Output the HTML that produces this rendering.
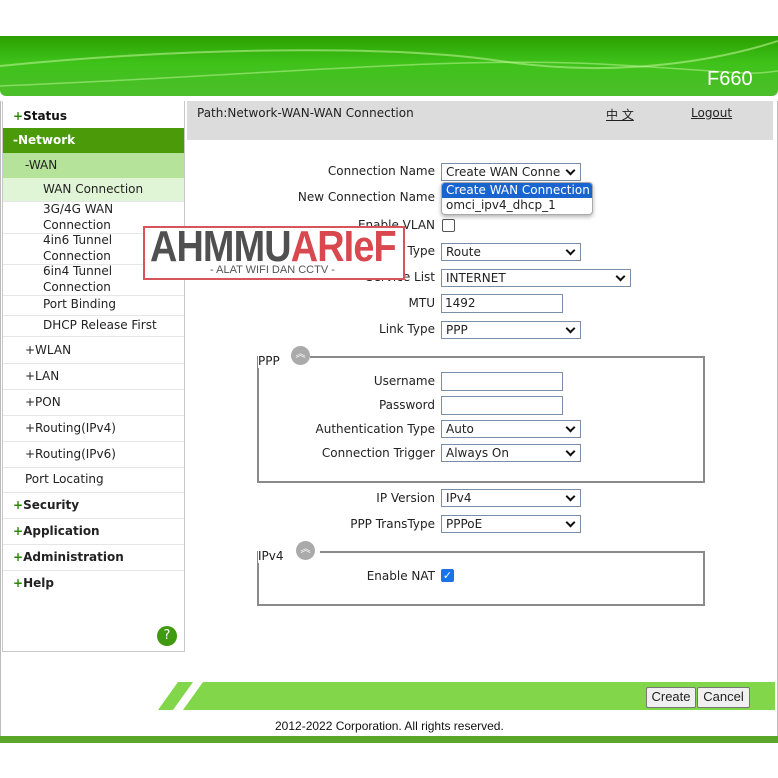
<!DOCTYPE html><html><head><meta charset="utf-8"><style>
body{margin:0;width:778px;height:778px;background:#fff;position:relative;overflow:hidden;font-family:"DejaVu Sans","Liberation Sans",sans-serif;font-size:12px;color:#222}
.a{position:absolute;white-space:nowrap}
.hdr{left:0;top:36px;width:778px;height:60px;background:linear-gradient(180deg,#2aa000 0%,#3fc21a 45%,#4bbf2a 100%);border-radius:0 0 6px 6px}
.side{left:2px;top:101px;width:181px;height:550px;border:1px solid #c8c8c8;border-top:none}
.r{position:absolute;left:0;width:181px;border-bottom:1px solid #e6e6e6;line-height:25px}
.lbl{position:absolute;right:343px;text-align:right}
.sel{position:absolute;left:441px;height:18px;border:1px solid #7a8da6;background:#fff;line-height:16px;padding-left:4px;box-sizing:border-box}
.sel:after{content:"";position:absolute;right:6px;top:3px;width:5px;height:5px;border-right:2px solid #111;border-bottom:2px solid #111;transform:rotate(45deg)}
.inp{position:absolute;left:441px;height:19px;border:1px solid #7a8da6;box-sizing:border-box;background:#fff;line-height:17px;padding-left:3px}
.fs{position:absolute;border:2px solid #8a8a8a}
.up{position:absolute;width:19px;height:19px;border-radius:50%;background:#aaa;color:#fff;font-size:10px;text-align:center;line-height:17px}
.btn{position:absolute;top:687px;height:19px;border:1px solid #777;background:#f0f0f0;border-radius:2px;font-family:"Liberation Sans",sans-serif;font-size:13px;line-height:18px;text-align:center}
</style></head><body>
<div class="a hdr"></div>
<svg class="a" style="left:0;top:36px" width="778" height="60"><path d="M0 30 C200 10 400 10 500 25 S700 30 778 5" stroke="#b8f090" stroke-width="2" fill="none" opacity=".6"/><path d="M0 50 C250 40 450 20 600 28 S740 40 778 35" stroke="#c8f8a0" stroke-width="1.5" fill="none" opacity=".5"/></svg>
<div class="a" style="left:707px;top:68px;color:#fff;font-family:'Liberation Sans',sans-serif;font-size:20px">F660</div>
<div class="a" style="left:0;top:101px;width:1px;height:636px;background:#bbb"></div>
<div class="a" style="left:777px;top:101px;width:1px;height:636px;background:#bbb"></div>
<div class="a side">
<div class="r" style="top:3px;font-weight:bold;color:#111"><span style="margin-left:10px;color:#2a8a00">+</span>Status</div>
<div class="r" style="top:27px;background:#4a9a0a;color:#fff;font-weight:bold;padding-left:10px;width:171px">-Network</div>
<div class="r" style="top:52px;background:#b6e39a;padding-left:22px;width:159px">-WAN</div>
<div class="r" style="top:77px;background:#e0f5d5;padding-left:40px;width:141px;line-height:23px">WAN Connection</div>
<div class="r" style="top:101px;padding-left:40px;width:141px;line-height:15.5px">3G/4G WAN<br>Connection</div>
<div class="r" style="top:132px;padding-left:40px;width:141px;line-height:15.5px">4in6 Tunnel<br>Connection</div>
<div class="r" style="top:163px;padding-left:40px;width:141px;line-height:15.5px">6in4 Tunnel<br>Connection</div>
<div class="r" style="top:193px;padding-left:40px;width:141px;line-height:21px">Port Binding</div>
<div class="r" style="top:214px;padding-left:40px;width:141px;line-height:21px">DHCP Release First</div>
<div class="r" style="top:237px;padding-left:22px;width:159px">+WLAN</div>
<div class="r" style="top:263px;padding-left:22px;width:159px">+LAN</div>
<div class="r" style="top:289px;padding-left:22px;width:159px">+PON</div>
<div class="r" style="top:315px;padding-left:22px;width:159px">+Routing(IPv4)</div>
<div class="r" style="top:341px;padding-left:22px;width:159px">+Routing(IPv6)</div>
<div class="r" style="top:366px;padding-left:22px;width:159px">Port Locating</div>
<div class="r" style="top:392px;font-weight:bold"><span style="margin-left:10px;color:#2a8a00">+</span>Security</div>
<div class="r" style="top:418px;font-weight:bold"><span style="margin-left:10px;color:#2a8a00">+</span>Application</div>
<div class="r" style="top:444px;font-weight:bold"><span style="margin-left:10px;color:#2a8a00">+</span>Administration</div>
<div class="r" style="top:470px;font-weight:bold;border:none"><span style="margin-left:10px;color:#2a8a00">+</span>Help</div>
<div style="position:absolute;left:154px;top:525px;width:20px;height:20px;border-radius:50%;background:#3f9a10;color:#fff;text-align:center;line-height:20px;font-size:13px">?</div>
</div>
<div class="a" style="left:187px;top:101px;width:586px;height:39px;background:#dcdcdc"></div>
<div class="a" style="left:197px;top:106px">Path:Network-WAN-WAN Connection</div>
<div class="a" style="left:606px;top:106px;text-decoration:underline">中 文</div>
<div class="a" style="left:691px;top:106px;text-decoration:underline">Logout</div>

<div class="lbl" style="top:164px">Connection Name</div>
<div class="sel" style="top:163px;width:140px">Create WAN Conne</div>
<div class="lbl" style="top:190px">New Connection Name</div>
<div class="lbl" style="top:218px">Enable VLAN</div>
<div class="a" style="left:442px;top:219px;width:11px;height:11px;border:1px solid #555;border-radius:2px"></div>
<div class="lbl" style="top:244px">Type</div>
<div class="sel" style="top:243px;width:140px">Route</div>
<div class="lbl" style="top:270px">Service List</div>
<div class="sel" style="top:269px;width:190px">INTERNET</div>
<div class="lbl" style="top:296px">MTU</div>
<div class="inp" style="top:294px;width:122px">1492</div>
<div class="lbl" style="top:322px">Link Type</div>
<div class="sel" style="top:321px;width:140px">PPP</div>

<div class="fs" style="left:257px;top:356px;width:444px;height:123px"></div>
<div class="a" style="left:258px;top:354px;background:#fff;padding-right:30px">PPP</div>
<div class="up" style="left:291px;top:346px">︽</div>
<div class="lbl" style="top:374px">Username</div>
<div class="inp" style="top:372px;width:122px"></div>
<div class="lbl" style="top:398px">Password</div>
<div class="inp" style="top:396px;width:122px"></div>
<div class="lbl" style="top:422px">Authentication Type</div>
<div class="sel" style="top:420px;width:140px">Auto</div>
<div class="lbl" style="top:446px">Connection Trigger</div>
<div class="sel" style="top:444px;width:140px">Always On</div>

<div class="lbl" style="top:491px">IP Version</div>
<div class="sel" style="top:489px;width:140px">IPv4</div>
<div class="lbl" style="top:517px">PPP TransType</div>
<div class="sel" style="top:515px;width:140px">PPPoE</div>

<div class="fs" style="left:257px;top:551px;width:444px;height:51px"></div>
<div class="a" style="left:258px;top:549px;background:#fff;padding-right:36px">IPv4</div>
<div class="up" style="left:296px;top:541px">︽</div>
<div class="lbl" style="top:569px">Enable NAT</div>
<div class="a" style="left:441px;top:569px;width:13px;height:13px;background:#1a73e8;border-radius:2px;color:#fff;font-size:11px;line-height:13px;text-align:center">✓</div>

<div class="a" style="left:441px;top:182px;width:150px;height:31px;background:#fff;border:1px solid #aaa;border-radius:4px;box-shadow:0 2px 4px rgba(0,0,0,.3);overflow:hidden">
<div style="background:#1a64d0;color:#fff;height:15px;line-height:15px;padding-left:4px">Create WAN Connection</div>
<div style="padding-left:4px;line-height:15px">omci_ipv4_dhcp_1</div></div>

<div class="a" style="left:143px;top:226px;width:258px;height:50px;border:2px solid #d9535a;background:#fff"></div>
<div class="a" style="left:150px;top:222px;font-family:'Liberation Sans',sans-serif;font-weight:bold;font-size:44px;letter-spacing:-1px;transform:scaleX(.86);transform-origin:0 0"><span style="color:#505050">AHMMU</span><span style="color:#d9474f">ARIeF</span></div>
<div class="a" style="left:210px;top:264px;font-family:'Liberation Sans',sans-serif;font-size:11px;color:#555">- ALAT WIFI DAN CCTV -</div>

<svg class="a" style="left:158px;top:682px" width="617" height="28"><polygon points="20,0 617,0 617,28 0,28" fill="#82d64a"/><polygon points="35,0 45,0 25,28 15,28" fill="#fff"/></svg>
<div class="btn" style="left:646px;width:48px">Create</div>
<div class="btn" style="left:697px;width:51px">Cancel</div>
<div class="a" style="left:275px;top:719px;font-family:'Liberation Sans',sans-serif;font-size:12px;color:#111">2012-2022 Corporation. All rights reserved.</div>
<div class="a" style="left:0;top:736px;width:778px;height:7px;background:#5aa52a"></div>
</body></html>
